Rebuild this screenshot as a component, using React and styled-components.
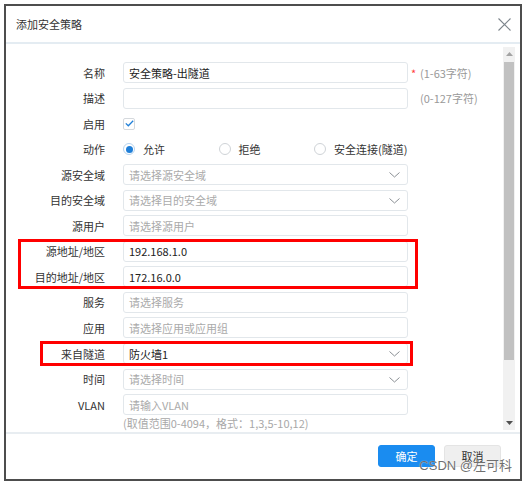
import React from 'react';
import styled, { createGlobalStyle } from 'styled-components';

const GlobalStyle = createGlobalStyle`
  html, body {
    margin: 0;
    padding: 0;
    background: #ffffff;
  }
  body {
    font-family: "Noto Sans CJK SC", "Noto Sans", sans-serif;
    font-size: 11px;
    color: #333;
  }
  *, *::before, *::after {
    box-sizing: border-box;
  }
`;

const Page = styled.div`
  width: 528px;
  height: 485px;
  padding: 4px 0 0 4px;
`;

const Dialog = styled.div`
  position: relative;
  width: 518px;
  height: 477px;
  border: 2px solid #4d4d4d;
  background: #fff;
  display: flex;
  flex-direction: column;
`;

const Header = styled.div`
  height: 38px;
  flex: none;
  display: flex;
  align-items: center;
  justify-content: space-between;
  padding: 0 9px 0 10px;
  border-bottom: 2px solid #e4ecf2;
`;

const Title = styled.div`
  font-size: 11px;
  color: #333;
`;

const Close = styled.button`
  border: 0;
  background: none;
  padding: 0;
  width: 14px;
  height: 14px;
  display: flex;
  align-items: center;
  justify-content: center;
`;

const Body = styled.div`
  flex: 1;
  display: flex;
  min-height: 0;
  overflow: hidden;
`;

const Form = styled.div`
  flex: 1;
  display: flex;
  flex-direction: column;
  gap: 4.55px;
  padding-top: 18px;
  overflow: hidden;
`;

const Row = styled.div`
  display: flex;
  align-items: center;
  height: 21px;
  flex-shrink: 0;
`;

const Label = styled.div`
  width: 99px;
  margin-right: 18px;
  text-align: right;
  color: #333;
  white-space: nowrap;
`;

const Field = styled.div`
  position: relative;
  width: 285px;
  height: 21px;
  border: 1px solid #e2e7eb;
  border-radius: 3px;
  padding: 0 22px 0 5px;
  display: flex;
  align-items: center;
  color: ${(p) => (p.$placeholder ? '#aaaaaa' : '#222')};
  white-space: nowrap;
`;

const Chevron = styled.svg`
  position: absolute;
  right: 7px;
  top: 7px;
`;

const Hint = styled.div`
  margin-left: 3px;
  color: #999;
  white-space: nowrap;
  display: flex;
`;

const Star = styled.span`
  width: 9px;
  color: ${(p) => (p.$show ? '#ff3b3b' : 'transparent')};
`;

const Checkbox = styled.span`
  width: 12px;
  height: 12px;
  border: 1px solid #d5d9dd;
  border-radius: 2px;
  display: flex;
  align-items: center;
  justify-content: center;
`;

const Radios = styled.div`
  display: flex;
  align-items: center;
`;

const RadioOption = styled.div`
  width: 95.5px;
  display: flex;
  align-items: center;
  gap: 8px;
  color: #333;
  white-space: nowrap;
`;

const RadioDot = styled.span`
  width: 12px;
  height: 12px;
  border-radius: 50%;
  border: 1px solid ${(p) => (p.$on ? '#b7d3ee' : '#cfd3d7')};
  display: flex;
  align-items: center;
  justify-content: center;
  &::after {
    content: '';
    width: 7px;
    height: 7px;
    border-radius: 50%;
    background: ${(p) => (p.$on ? '#1f7fd8' : 'transparent')};
  }
`;

const Note = styled.div`
  margin-left: 117px;
  margin-top: -3px;
  color: #a8a8a8;
  line-height: 12px;
  flex-shrink: 0;
`;

const Highlight = styled.div`
  position: relative;
  display: flex;
  flex-direction: column;
  gap: 4.55px;
  flex-shrink: 0;
  &::after {
    content: '';
    position: absolute;
    top: -2px;
    bottom: -2px;
    left: ${(p) => p.$left}px;
    width: ${(p) => p.$width}px;
    border: 3px solid #ff0000;
    pointer-events: none;
  }
`;

const ScrollBar = styled.div`
  width: 12px;
  margin: 3px 5px 2px 0;
  background: #f1f1f1;
  display: flex;
  flex-direction: column;
  align-items: center;
`;

const ScrollArrow = styled.div`
  height: 14px;
  width: 12px;
  flex-shrink: 0;
  display: flex;
  align-items: center;
  justify-content: center;
`;

const Thumb = styled.div`
  width: 10px;
  height: 298px;
  flex-shrink: 0;
  margin-top: 1px;
  background: #c1c1c1;
`;

const Spacer = styled.div`
  flex: 1;
`;

const Footer = styled.div`
  height: 47px;
  flex: none;
  border-top: 2px solid #e8edf1;
  display: flex;
  justify-content: flex-end;
  align-items: flex-start;
  gap: 9px;
  padding: 11px 19px 0 0;
`;

const Button = styled.button`
  width: 57px;
  height: 22px;
  border-radius: 3px;
  font-family: "Noto Sans CJK SC", sans-serif;
  font-size: 11px;
  padding: 0;
  border: 1px solid ${(p) => (p.$primary ? '#1a8cf0' : '#e4e4e4')};
  background: ${(p) => (p.$primary ? '#1a8cf0' : '#efefef')};
  color: ${(p) => (p.$primary ? '#ffffff' : '#333')};
`;

const Watermark = styled.div`
  position: absolute;
  right: 8px;
  bottom: 5px;
  font-family: "Liberation Sans", "Noto Sans CJK SC", sans-serif;
  font-size: 13px;
  color: rgba(85, 85, 85, 0.85);
  text-shadow: 0 0 1px #fff;
  pointer-events: none;
`;

const ChevronIcon = () => (
  <Chevron width="11" height="6" viewBox="0 0 11 6">
    <path d="M0.5 0.5 L5.5 5 L10.5 0.5" fill="none" stroke="#8a8f94" strokeWidth="1" />
  </Chevron>
);

function Input({ value, placeholder, select }) {
  return (
    <Field $placeholder={!value}>
      {value || placeholder}
      {select && <ChevronIcon />}
    </Field>
  );
}

function FormRow({ label, children, hint, required }) {
  return (
    <Row>
      <Label>{label}</Label>
      {children}
      {hint && (
        <Hint>
          <Star $show={required}>*</Star>
          {hint}
        </Hint>
      )}
    </Row>
  );
}

export default function App() {
  return (
    <>
      <GlobalStyle />
      <Page>
        <Dialog>
          <Header>
            <Title>添加安全策略</Title>
            <Close>
              <svg width="13" height="13" viewBox="0 0 13 13">
                <path d="M0.5 0.5 L12.5 12.5 M12.5 0.5 L0.5 12.5" stroke="#7d858c" strokeWidth="1.1" />
              </svg>
            </Close>
          </Header>
          <Body>
            <Form>
              <FormRow label="名称" hint="(1-63字符)" required>
                <Input value="安全策略-出隧道" />
              </FormRow>
              <FormRow label="描述" hint="(0-127字符)">
                <Input />
              </FormRow>
              <FormRow label="启用">
                <Checkbox>
                  <svg width="9" height="7" viewBox="0 0 9 7">
                    <path d="M0.8 3.4 L3.3 5.8 L8.2 0.8" fill="none" stroke="#1f7fd8" strokeWidth="1.3" />
                  </svg>
                </Checkbox>
              </FormRow>
              <FormRow label="动作">
                <Radios>
                  <RadioOption><RadioDot $on />允许</RadioOption>
                  <RadioOption><RadioDot />拒绝</RadioOption>
                  <RadioOption><RadioDot />安全连接(隧道)</RadioOption>
                </Radios>
              </FormRow>
              <FormRow label="源安全域">
                <Input placeholder="请选择源安全域" select />
              </FormRow>
              <FormRow label="目的安全域">
                <Input placeholder="请选择目的安全域" select />
              </FormRow>
              <FormRow label="源用户">
                <Input placeholder="请选择源用户" />
              </FormRow>
              <Highlight $left={12} $width={400}>
                <FormRow label="源地址/地区">
                  <Input value="192.168.1.0" />
                </FormRow>
                <FormRow label="目的地址/地区">
                  <Input value="172.16.0.0" />
                </FormRow>
              </Highlight>
              <FormRow label="服务">
                <Input placeholder="请选择服务" />
              </FormRow>
              <FormRow label="应用">
                <Input placeholder="请选择应用或应用组" />
              </FormRow>
              <Highlight $left={34} $width={373}>
                <FormRow label="来自隧道">
                  <Input value="防火墙1" select />
                </FormRow>
              </Highlight>
              <FormRow label="时间">
                <Input placeholder="请选择时间" select />
              </FormRow>
              <FormRow label="VLAN">
                <Input placeholder="请输入VLAN" />
              </FormRow>
              <Note>(取值范围0-4094，格式：1,3,5-10,12)</Note>
            </Form>
            <ScrollBar>
              <ScrollArrow>
                <svg width="7" height="4" viewBox="0 0 7 4">
                  <path d="M0 4 L3.5 0 L7 4 Z" fill="#a3a3a3" />
                </svg>
              </ScrollArrow>
              <Thumb />
              <Spacer />
              <ScrollArrow>
                <svg width="7" height="4" viewBox="0 0 7 4">
                  <path d="M0 0 L7 0 L3.5 4 Z" fill="#505050" />
                </svg>
              </ScrollArrow>
            </ScrollBar>
          </Body>
          <Footer>
            <Button $primary>确定</Button>
            <Button>取消</Button>
          </Footer>
          <Watermark>CSDN @左可科</Watermark>
        </Dialog>
      </Page>
    </>
  );
}
